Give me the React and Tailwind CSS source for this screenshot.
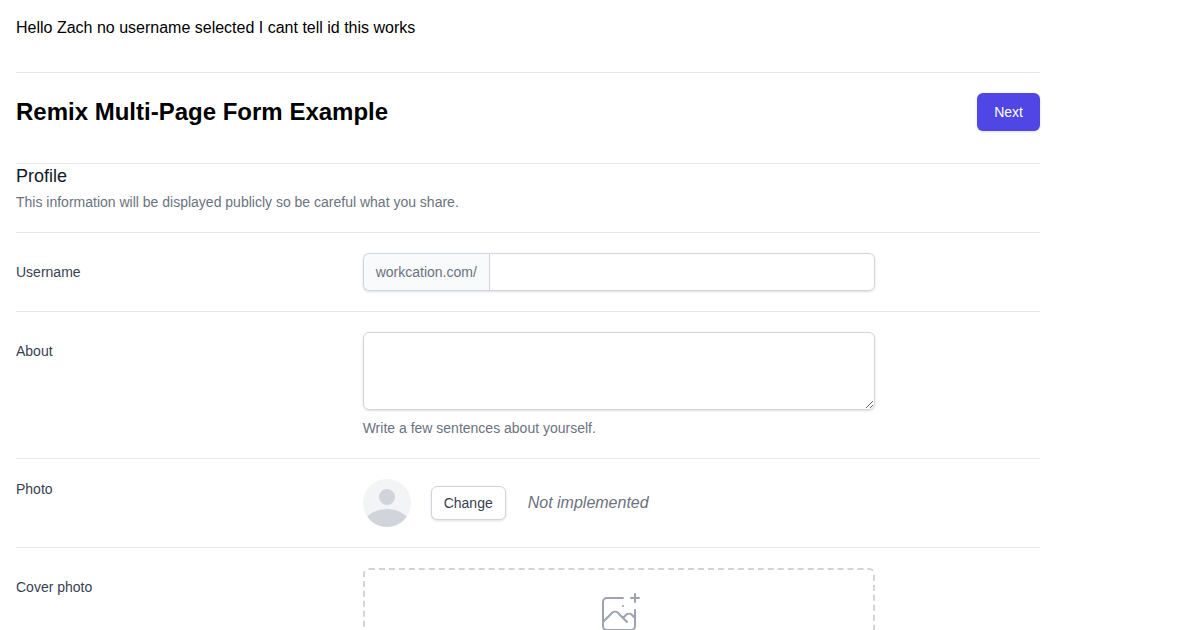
import React from "react";

const rowClass =
  "grid grid-cols-3 gap-4 items-start border-t border-[#E5E7EB] pt-5";
const labelClass = "block text-sm font-medium text-[#374151] mt-px pt-2";

const App = () => {
  return (
    <div className="h-screen overflow-hidden bg-white font-['Liberation_Sans',Arial,sans-serif] text-black">
      <div className="w-[1056px] p-4">
        <p className="text-base">
          Hello Zach no username selected I cant tell id this works
        </p>
        <hr className="mt-8 border-0 border-t border-[#E5E7EB]" />
        <div className="flex justify-between items-center pt-5 pb-8">
          <h1 className="text-2xl font-bold">Remix Multi-Page Form Example</h1>
          <button
            type="button"
            className="rounded-md border border-transparent bg-[#4F46E5] py-2 px-4 text-sm font-medium text-white shadow-sm"
          >
            Next
          </button>
        </div>

        <div className="border-t border-[#E5E7EB]">
          <h3 className="text-lg leading-6 font-medium text-[#111827]">
            Profile
          </h3>
          <p className="mt-1 text-sm text-[#6B7280]">
            This information will be displayed publicly so be careful what you
            share.
          </p>
        </div>

        <div className="mt-5">
          <div className={`${rowClass} pb-5`}>
            <label htmlFor="username" className={labelClass}>
              Username
            </label>
            <div className="col-span-2">
              <div className="flex max-w-lg rounded-md shadow-sm">
                <span className="inline-flex items-center rounded-l-md border border-r-0 border-[#D1D5DB] bg-[#F9FAFB] px-3 text-sm text-[#6B7280]">
                  workcation.com/
                </span>
                <input
                  id="username"
                  type="text"
                  className="block h-[38px] min-w-0 flex-1 rounded-r-md border border-[#D1D5DB] text-sm"
                />
              </div>
            </div>
          </div>

          <div className={`${rowClass} pb-5`}>
            <label htmlFor="about" className={labelClass}>
              About
            </label>
            <div className="col-span-2">
              <textarea
                id="about"
                rows={3}
                className="block w-full max-w-lg rounded-md border border-[#D1D5DB] px-3 py-2 text-sm shadow-sm"
              />
              <p className="mt-2 text-sm text-[#6B7280]">
                Write a few sentences about yourself.
              </p>
            </div>
          </div>

          <div className={`${rowClass} pb-5 items-center`}>
            <label className="block text-sm font-medium text-[#374151]">
              Photo
            </label>
            <div className="col-span-2 flex items-center">
              <span className="h-12 w-12 overflow-hidden rounded-full bg-[#F3F4F6]">
                <svg
                  className="h-full w-full text-[#D1D5DB]"
                  fill="currentColor"
                  viewBox="0 0 24 24"
                >
                  <path d="M24 20.993V24H0v-2.996A14.977 14.977 0 0112.004 15c4.904 0 9.26 2.354 11.996 5.993zM16.002 8.999a4 4 0 11-8 0 4 4 0 018 0z" />
                </svg>
              </span>
              <button
                type="button"
                className="ml-5 rounded-md border border-[#D1D5DB] bg-white py-2 px-3 text-sm leading-4 font-medium text-[#374151] shadow-sm"
              >
                Change
              </button>
              <em className="ml-[22px] text-base text-[#6B7280]">
                Not implemented
              </em>
            </div>
          </div>

          <div className={rowClass}>
            <label className={labelClass}>Cover photo</label>
            <div className="col-span-2">
              <div className="flex h-[160px] max-w-lg justify-center rounded-md border-2 border-dashed border-[#D1D5DB] pt-5">
                <svg
                  className="h-12 w-12 text-[#9CA3AF]"
                  stroke="currentColor"
                  fill="none"
                  viewBox="0 0 48 48"
                >
                  <path
                    d="M28 8H12a4 4 0 00-4 4v20m32-12v8m0 0v8a4 4 0 01-4 4H12a4 4 0 01-4-4v-4m32-4l-3.172-3.172a4 4 0 00-5.656 0L28 28M8 32l9.172-9.172a4 4 0 015.656 0L28 28m0 0l4 4m4-24h8m-4-4v8m-12 4h.02"
                    strokeWidth="2"
                    strokeLinecap="round"
                    strokeLinejoin="round"
                  />
                </svg>
              </div>
            </div>
          </div>
        </div>
      </div>
    </div>
  );
};

export default App;
